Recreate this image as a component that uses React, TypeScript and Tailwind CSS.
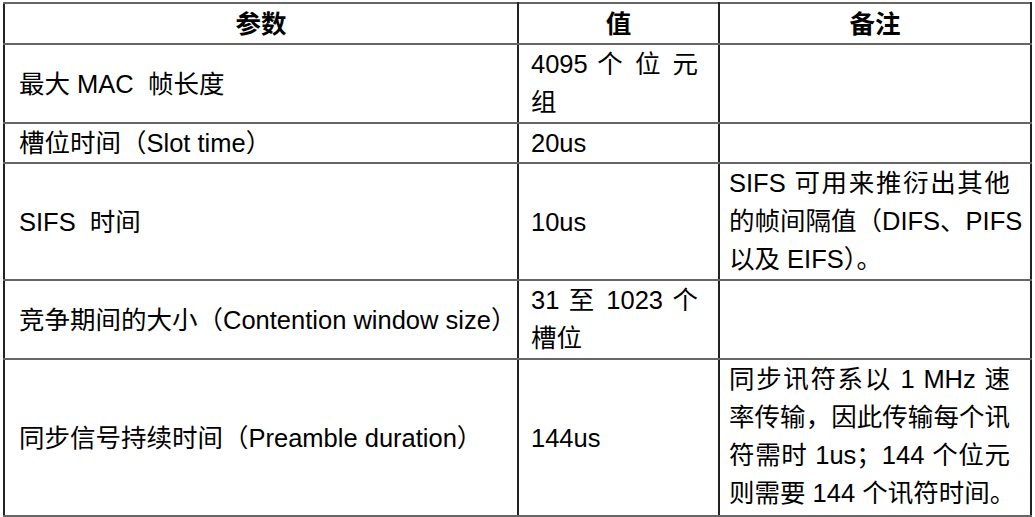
const Line = ({ children, last }: { children: React.ReactNode; last?: boolean }) => (
  <div className={last ? "whitespace-nowrap" : "whitespace-nowrap text-justify [text-align-last:justify]"}>
    {children}
  </div>
);

const rows = [
  {
    h: "h-[79px]",
    name: "最大 MAC  帧长度",
    value: ["4095  个 位 元", "组"],
    note: [] as string[],
  },
  { h: "h-[39px]", name: "槽位时间（Slot time）", value: ["20us"], note: [] as string[] },
  {
    h: "h-[117px]",
    name: "SIFS  时间",
    value: ["10us"],
    note: ["SIFS  可用来推衍出其他", "的帧间隔值（DIFS、PIFS", "以及 EIFS）。"],
  },
  {
    h: "h-[79px]",
    name: "竞争期间的大小（Contention window size）",
    value: ["31  至  1023  个", "槽位"],
    note: [] as string[],
  },
  {
    h: "h-[157px]",
    name: "同步信号持续时间（Preamble duration）",
    value: ["144us"],
    note: ["同步讯符系以  1  MHz  速", "率传输，因此传输每个讯", "符需时  1us；144  个位元", "则需要 144  个讯符时间。"],
  },
];

export default function App() {
  return (
    <div className="w-[1035px] h-[517px] bg-white pl-[3px] pt-[2px] font-['Liberation_Sans','Noto_Sans_CJK_SC',sans-serif] text-[25.5px] leading-[38px] text-black">
      <table className="table-fixed border-collapse w-[1027px]">
        <colgroup>
          <col className="w-[514px]" />
          <col className="w-[201px]" />
          <col className="w-[312px]" />
        </colgroup>
        <thead>
          <tr className="h-[41px]">
            {["参数", "值", "备注"].map((t) => (
              <th
                key={t}
                className="border-y-2 border-y-[#666] border-x-2 border-x-[#222] text-center font-bold align-middle p-0"
              >
                {t}
              </th>
            ))}
          </tr>
        </thead>
        <tbody>
          {rows.map((r) => (
            <tr key={r.name} className={r.h}>
              <td className="border-y-2 border-y-[#666] border-x-2 border-x-[#222] pl-[14px] py-0 align-middle whitespace-pre">
                {r.name}
              </td>
              <td
                className={`border-y-2 border-y-[#666] border-x-2 border-x-[#222] pl-[12px] pr-[20px] py-0 whitespace-pre ${
                  r.value.length > 1 ? "align-top" : "align-middle"
                }`}
              >
                {r.value.map((l, i) => (
                  <Line key={l} last={i === r.value.length - 1}>
                    {l}
                  </Line>
                ))}
              </td>
              <td className="border-y-2 border-y-[#666] border-x-2 border-x-[#222] pl-[9px] pr-[20px] py-0 align-top whitespace-pre">
                {r.note.map((l, i) => (
                  <Line key={l} last={i === r.note.length - 1}>
                    {l}
                  </Line>
                ))}
              </td>
            </tr>
          ))}
        </tbody>
      </table>
    </div>
  );
}
